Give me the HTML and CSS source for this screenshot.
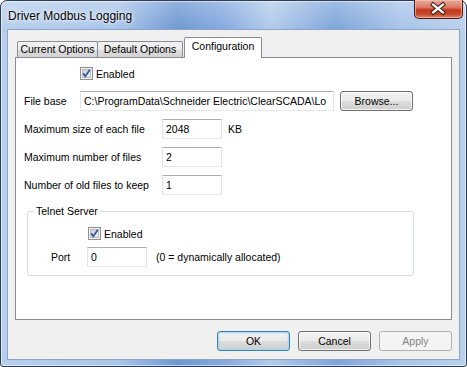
FILE: index.html
```html
<!DOCTYPE html>
<html>
<head>
<meta charset="utf-8">
<link rel="stylesheet" href="styles.css">
</head>
<body>
<div class="window">
  <div class="titlebar">
    <div class="title">Driver Modbus Logging</div>
    <div class="close">
      <svg width="49" height="19" viewBox="0 0 49 19">
        <path d="M19.5 5.5 L29.5 13.5 M29.5 5.5 L19.5 13.5" stroke="#3b1a14" stroke-width="4.4" stroke-linecap="square"/>
        <path d="M19.5 5.5 L29.5 13.5 M29.5 5.5 L19.5 13.5" stroke="#ffffff" stroke-width="2.4" stroke-linecap="square"/>
      </svg>
    </div>
  </div>
  <div class="client">
    <div class="tabs">
      <div class="tab t1">Current Options</div>
      <div class="tab t2">Default Options</div>
      <div class="tab sel">Configuration</div>
    </div>
    <div class="panel">
      <div class="row r-enabled">
        <span class="cb"><svg width="13" height="13" viewBox="0 0 13 13"><defs><linearGradient id="g1" x1="0" y1="0" x2="1" y2="1"><stop offset="0" stop-color="#c9ccd1"/><stop offset="1" stop-color="#f6f6f6"/></linearGradient></defs><rect x="0.5" y="0.5" width="12" height="12" fill="#f4f4f4" stroke="#8f8f8f"/><rect x="2.5" y="2.5" width="8" height="8" fill="url(#g1)" stroke="#b9bcc1"/><path d="M3.2 6.4 L5.4 9.3 L9.8 2.8" fill="none" stroke="#3a5a9c" stroke-width="1.8"/></svg></span>
        <span class="cbl">Enabled</span>
      </div>
      <div class="row r-file">
        <span class="lbl l1">File base</span>
        <span class="field wide">C:\ProgramData\Schneider Electric\ClearSCADA\Lo</span>
        <span class="btn browse">Browse...</span>
      </div>
      <div class="row r-num">
        <span class="lbl l2">Maximum size of each file</span>
        <span class="field small">2048</span>
        <span class="unit">KB</span>
      </div>
      <div class="row r-num">
        <span class="lbl l2">Maximum number of files</span>
        <span class="field small">2</span>
      </div>
      <div class="row r-num">
        <span class="lbl l2">Number of old files to keep</span>
        <span class="field small">1</span>
      </div>
      <div class="group">
        <div class="legend"><span>Telnet Server</span></div>
        <div class="row g-enabled">
          <span class="cb"><svg width="13" height="13" viewBox="0 0 13 13"><defs><linearGradient id="g2" x1="0" y1="0" x2="1" y2="1"><stop offset="0" stop-color="#c9ccd1"/><stop offset="1" stop-color="#f6f6f6"/></linearGradient></defs><rect x="0.5" y="0.5" width="12" height="12" fill="#f4f4f4" stroke="#8f8f8f"/><rect x="2.5" y="2.5" width="8" height="8" fill="url(#g2)" stroke="#b9bcc1"/><path d="M3.2 6.4 L5.4 9.3 L9.8 2.8" fill="none" stroke="#3a5a9c" stroke-width="1.8"/></svg></span>
          <span class="cbl">Enabled</span>
        </div>
        <div class="row g-port">
          <span class="lbl l3">Port</span>
          <span class="field small">0</span>
          <span class="note">(0 = dynamically allocated)</span>
        </div>
      </div>
    </div>
    <div class="buttons">
      <span class="btn ok">OK</span>
      <span class="btn">Cancel</span>
      <span class="btn disabled">Apply</span>
    </div>
  </div>
</div>
</body>
</html>
```

FILE: styles.css
```css
html, body {
  margin: 0;
  padding: 0;
  background: #ffffff;
}
body {
  width: 467px;
  height: 367px;
  overflow: hidden;
  font-family: "Liberation Sans", Arial, sans-serif;
  font-size: 10.5px;
  color: #000;
}
.window {
  box-sizing: border-box;
  width: 467px;
  height: 367px;
  border: 1px solid #2f3d52;
  border-radius: 7px 7px 3px 3px;
  padding: 0 7px 7px 7px;
  background:
    linear-gradient(180deg, rgba(255,255,255,0.25) 0px, rgba(255,255,255,0) 29px),
    linear-gradient(90deg, #b7cfec 0%, #a9c5ea 25%, #6f98d2 38%, #86aade 48%, #b2cbeb 58%, #7ea5d9 72%, #a8c4e9 86%, #b9d1ee 100%);
  box-shadow: inset 0 0 0 1px rgba(255,255,255,0.55);
}
.titlebar {
  height: 29px;
  display: flex;
  justify-content: space-between;
  align-items: flex-start;
}
.title {
  font-size: 12px;
  margin-top: 8px;
  line-height: 14px;
  text-shadow: 0 0 6px rgba(255,255,255,0.95), 0 0 3px rgba(255,255,255,0.9);
}
.close {
  width: 49px;
  height: 19px;
  margin-right: -4px;
  margin-top: -1px;
  border: 1px solid #4a1810;
  border-top: none;
  border-radius: 0 0 5px 5px;
  box-sizing: border-box;
  background: linear-gradient(180deg, #e9a99b 0%, #dc7c66 40%, #c5381c 55%, #c94a2e 80%, #e08a6b 100%);
  box-shadow: inset 0 0 0 1px rgba(255,200,190,0.6);
  display: flex;
}
.close svg { display: block; margin: -1px 0 0 -1px; }
.client {
  box-sizing: border-box;
  height: 329px;
  background: #f0f0f0;
  padding: 7px 7px 8px 7px;
  box-shadow: 0 0 0 1px #8ea4c4;
  display: flex;
  flex-direction: column;
}
.tabs {
  height: 20px;
  display: flex;
  align-items: flex-end;
  padding-left: 2px;
  position: relative;
  z-index: 2;
}
.tab {
  box-sizing: border-box;
  height: 16px;
  border: 1px solid #898c95;
  border-bottom: none;
  border-radius: 2px 2px 0 0;
  background: linear-gradient(180deg, #f3f3f3 0%, #ebebeb 50%, #dddddd 51%, #d3d3d3 100%);
  text-align: center;
  line-height: 15px;
  white-space: nowrap;
}
.t1 { width: 81px; }
.t2 { width: 86px; margin-left: -1px; }
.tab.sel {
  width: 78px;
  height: 21px;
  margin-left: 1px;
  margin-bottom: -1px;
  background: #ffffff;
  line-height: 17px;
}
.panel {
  box-sizing: border-box;
  height: 263px;
  background: #ffffff;
  border: 1px solid #898c95;
  padding: 0 0 0 8px;
  position: relative;
  z-index: 1;
}
.row {
  display: flex;
  align-items: center;
}
.r-enabled {
  height: 13px;
  margin-top: 9px;
  margin-left: 56px;
}
.cb { width: 13px; height: 13px; display: block; }
.cb svg { display: block; }
.cbl { margin-left: 3px; }
.r-file { height: 20px; margin-top: 11px; }
.r-num { height: 20px; margin-top: 8px; }
.lbl { display: block; white-space: nowrap; }
.l1 { width: 56px; }
.l2 { width: 138px; }
.field {
  box-sizing: border-box;
  height: 20px;
  border: 1px solid #e2e3ea;
  border-top-color: #abadb3;
  border-bottom-color: #e3e9ef;
  background: #fff;
  padding-left: 3px;
  line-height: 18px;
  white-space: nowrap;
  overflow: hidden;
  display: block;
}
.wide { width: 254px; }
.small { width: 60px; }
.unit { margin-left: 6px; }
.btn {
  box-sizing: border-box;
  width: 73px;
  height: 20px;
  border: 1px solid #707070;
  border-radius: 3px;
  background: linear-gradient(180deg, #f2f2f2 0%, #ebebeb 50%, #dddddd 51%, #cfcfcf 100%);
  box-shadow: inset 0 0 0 1px rgba(255,255,255,0.7);
  text-align: center;
  line-height: 18px;
  display: block;
}
.browse { margin-left: 6px; }
.group {
  box-sizing: border-box;
  width: 387px;
  height: 65px;
  margin-top: 16px;
  margin-left: 3px;
  border: 1px solid #d5dfe5;
  border-radius: 3px;
  padding-left: 0;
}
.legend {
  height: 13px;
  margin-top: -7px;
  line-height: 13px;
  padding-left: 6px;
}
.legend span {
  background: #fff;
  padding: 0 2px;
}
.g-enabled {
  height: 13px;
  margin-top: 9px;
  margin-left: 60px;
}
.g-port {
  height: 20px;
  margin-top: 7px;
  margin-left: 23px;
}
.l3 { width: 36px; }
.note { margin-left: 9px; }
.buttons {
  margin-top: 11px;
  display: flex;
  justify-content: flex-end;
  gap: 8px;
}
.btn.ok {
  border-color: #3c7fb1;
  box-shadow: inset 0 0 0 1px #a8dcf5, inset 0 0 2px 1px rgba(120,200,240,0.5);
}
.btn.disabled {
  border-color: #adb2b5;
  background: #f4f4f4;
  box-shadow: none;
  color: #838383;
}
```
